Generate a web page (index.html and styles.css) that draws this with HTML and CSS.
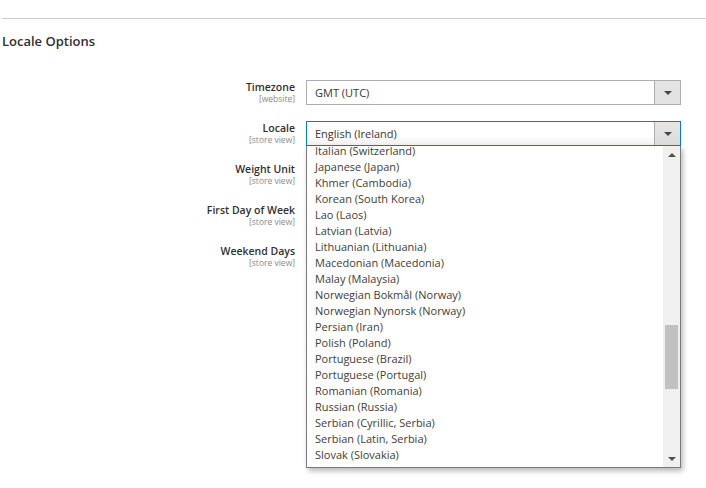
FILE: index.html
```html
<!DOCTYPE html>
<html lang="en">
<head>
<meta charset="utf-8">
<title>Locale Options</title>
<link rel="stylesheet" href="styles.css">
</head>
<body>
<div class="page">
  <hr class="rule">
  <h2 class="section-title">Locale Options</h2>
  <div class="form">
    <div class="row">
      <div class="label"><span class="name">Timezone</span><span class="scope">[website]</span></div>
      <div class="field">
        <div class="select"><span class="value">GMT (UTC)</span><span class="arrow"></span></div>
      </div>
    </div>
    <div class="row">
      <div class="label"><span class="name">Locale</span><span class="scope">[store view]</span></div>
      <div class="field">
        <div class="select focused"><span class="value">English (Ireland)</span><span class="arrow"></span></div>
        <div class="dropdown">
          <div class="options">
            <ul class="list">
              <li>Italian (Switzerland)</li>
              <li>Japanese (Japan)</li>
              <li>Khmer (Cambodia)</li>
              <li>Korean (South Korea)</li>
              <li>Lao (Laos)</li>
              <li>Latvian (Latvia)</li>
              <li>Lithuanian (Lithuania)</li>
              <li>Macedonian (Macedonia)</li>
              <li>Malay (Malaysia)</li>
              <li>Norwegian Bokmål (Norway)</li>
              <li>Norwegian Nynorsk (Norway)</li>
              <li>Persian (Iran)</li>
              <li>Polish (Poland)</li>
              <li>Portuguese (Brazil)</li>
              <li>Portuguese (Portugal)</li>
              <li>Romanian (Romania)</li>
              <li>Russian (Russia)</li>
              <li>Serbian (Cyrillic, Serbia)</li>
              <li>Serbian (Latin, Serbia)</li>
              <li>Slovak (Slovakia)</li>
            </ul>
          </div>
          <div class="scrollbar">
            <div class="sb-btn up"></div>
            <div class="sb-track"><div class="sb-thumb"></div></div>
            <div class="sb-btn down"></div>
          </div>
        </div>
      </div>
    </div>
    <div class="row">
      <div class="label"><span class="name">Weight Unit</span><span class="scope">[store view]</span></div>
      <div class="field"></div>
    </div>
    <div class="row">
      <div class="label"><span class="name">First Day of Week</span><span class="scope">[store view]</span></div>
      <div class="field"></div>
    </div>
    <div class="row">
      <div class="label"><span class="name">Weekend Days</span><span class="scope">[store view]</span></div>
      <div class="field"></div>
    </div>
  </div>
</div>
</body>
</html>
```

FILE: styles.css
```css
* { box-sizing: border-box; }
html, body {
  margin: 0;
  padding: 0;
  background: #ffffff;
  font-family: "Open Sans", "Liberation Sans", sans-serif;
  color: #303030;
}
.page {
  width: 706px;
  height: 488px;
  overflow: hidden;
  padding-left: 2px;
}
.rule {
  border: 0;
  border-top: 1px solid #cccccc;
  margin: 18px 0 0 0;
  height: 0;
}
.section-title {
  margin: 13px 0 0 0;
  font-size: 13px;
  line-height: 18px;
  font-weight: 600;
  color: #303030;
}
.form {
  margin-top: 30px;
  margin-left: -2px;
  display: flex;
  flex-direction: column;
  gap: 16px;
}
.row {
  display: grid;
  grid-template-columns: 295px 375px;
  column-gap: 11px;
  height: 25px;
}
.label {
  display: flex;
  flex-direction: column;
  align-items: flex-end;
  text-align: right;
}
.name {
  font-size: 10.5px;
  line-height: 14px;
  font-weight: 600;
  color: #303030;
}
.scope {
  font-size: 8.5px;
  line-height: 10px;
  color: #8a8a8a;
}
.field {
  position: relative;
}
.select {
  display: flex;
  height: 25px;
  border: 1px solid #adadad;
  background: #ffffff;
}
.select .value {
  flex: 1;
  padding-left: 8px;
  font-size: 11px;
  line-height: 23px;
  color: #3a3633;
}
.select .arrow {
  width: 26px;
  background: #e3e3e3;
  border-left: 1px solid #adadad;
  display: flex;
  align-items: center;
  justify-content: center;
}
.select .arrow::after {
  content: "";
  width: 0;
  height: 0;
  border-left: 4px solid transparent;
  border-right: 4px solid transparent;
  border-top: 4px solid #4a4542;
}
.select.focused {
  border-color: #007bdb;
  background: linear-gradient(#ffffff 60%, #f0f0f0);
}
.select.focused .arrow {
  background: linear-gradient(#e6e6e6, #dcdcdc);
}
.dropdown {
  position: absolute;
  left: 0;
  top: 25px;
  width: 375px;
  height: 322px;
  display: flex;
  background: #ffffff;
  border: 1px solid #7a7a7a;
  border-top: 0;
  box-shadow: 2px 3px 5px rgba(0, 0, 0, 0.28);
  z-index: 5;
}
.options {
  flex: 1;
  overflow: hidden;
}
.list {
  list-style: none;
  margin: -3px 0 0 0;
  padding: 0;
}
.list li {
  height: 16px;
  line-height: 16px;
  padding-left: 8px;
  font-size: 11px;
  color: #423d3a;
  white-space: nowrap;
}
.scrollbar {
  width: 17px;
  background: #f0f0f0;
  display: flex;
  flex-direction: column;
}
.sb-btn {
  height: 17px;
  display: flex;
  align-items: center;
  justify-content: center;
}
.sb-btn.up::after {
  content: "";
  border-left: 4px solid transparent;
  border-right: 4px solid transparent;
  border-bottom: 4px solid #505050;
}
.sb-btn.down::after {
  content: "";
  border-left: 4px solid transparent;
  border-right: 4px solid transparent;
  border-top: 4px solid #505050;
}
.sb-track {
  flex: 1;
  padding: 0 2px;
}
.sb-thumb {
  margin-top: 162px;
  height: 64px;
  background: #c1c1c1;
}
```
